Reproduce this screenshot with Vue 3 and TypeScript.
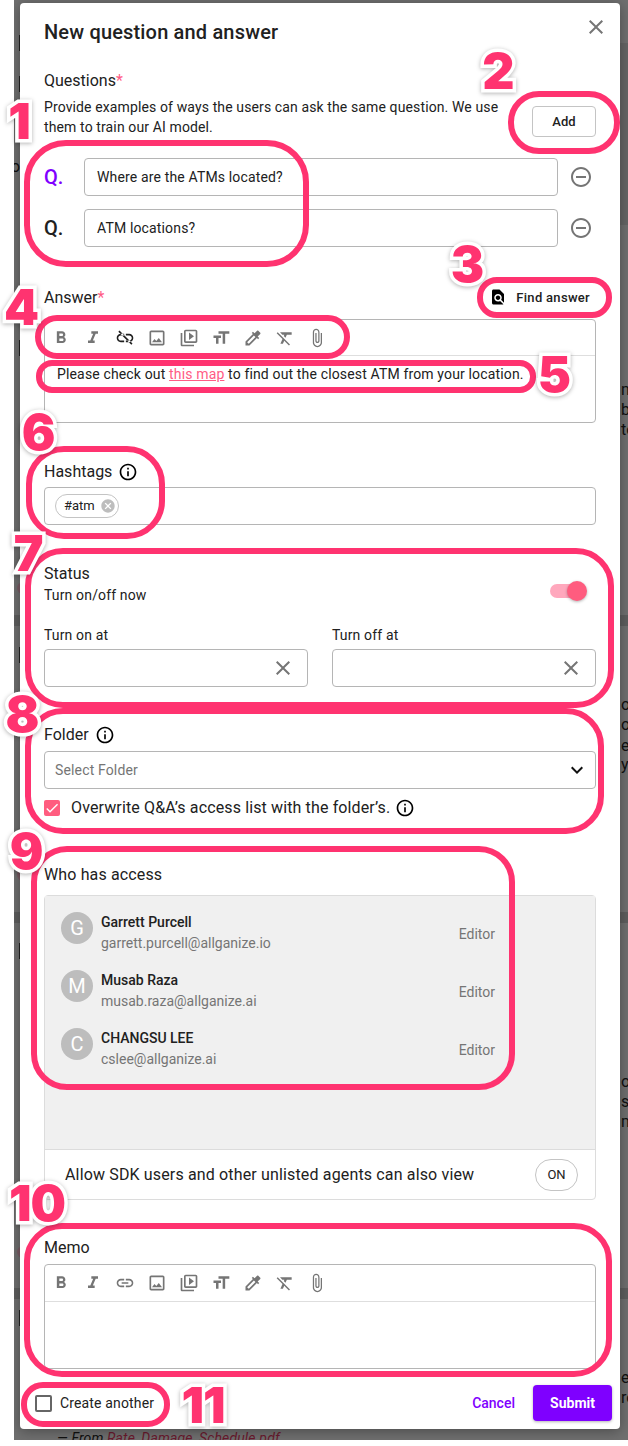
<script setup lang="ts">
interface Ring { x: number; y: number; w: number; h: number; r: number }
interface Mark { text: string; x: number; y: number }

const icons: Record<string, string> = {
  bold: 'M15.6 10.79c.97-.67 1.65-1.77 1.65-2.79 0-2.26-1.75-4-4-4H7v14h7.04c2.09 0 3.71-1.7 3.71-3.79 0-1.52-.86-2.82-2.15-3.42zM10 6.5h3c.83 0 1.5.67 1.5 1.5s-.67 1.5-1.5 1.5h-3v-3zm3.5 9H10v-3h3.5c.83 0 1.5.67 1.5 1.5s-.67 1.5-1.5 1.5z',
  italic: 'M10 4v3h2.21l-3.42 8H6v3h8v-3h-2.21l3.42-8H18V4z',
  link: 'M3.9 12c0-1.71 1.39-3.1 3.1-3.1h4V7H7c-2.76 0-5 2.24-5 5s2.24 5 5 5h4v-1.9H7c-1.71 0-3.1-1.39-3.1-3.1zM8 13h8v-2H8v2zm9-6h-4v1.9h4c1.71 0 3.1 1.39 3.1 3.1s-1.39 3.1-3.1 3.1h-4V17h4c2.76 0 5-2.24 5-5s-2.24-5-5-5z',
  linkOff: 'M3.9 12c0-1.71 1.39-3.1 3.1-3.1h4V7H7c-2.76 0-5 2.24-5 5s2.24 5 5 5h4v-1.9H7c-1.71 0-3.1-1.39-3.1-3.1zM17 7h-4v1.9h4c1.71 0 3.1 1.39 3.1 3.1s-1.39 3.1-3.1 3.1h-4V17h4c2.76 0 5-2.24 5-5s-2.24-5-5-5zM5.4 3l15.6 15.6-1.4 1.4L4 4.4z',
  image: 'M19 5v14H5V5h14m0-2H5c-1.1 0-2 .9-2 2v14c0 1.1.9 2 2 2h14c1.1 0 2-.9 2-2V5c0-1.1-.9-2-2-2zm-4.86 8.86l-3 3.87L9 13.14 6 17h12l-3.86-5.14z',
  video: 'M4 6H2v14c0 1.1.9 2 2 2h14v-2H4V6zm16-4H8c-1.1 0-2 .9-2 2v12c0 1.1.9 2 2 2h12c1.1 0 2-.9 2-2V4c0-1.1-.9-2-2-2zm0 14H8V4h12v12zM12 5.5v9l6-4.5z',
  size: 'M9 4v3h5v12h3V7h5V4H9zm-6 8h3v7h3v-7h3V9H3v3z',
  colorize: 'M20.71 5.63l-2.34-2.34c-.39-.39-1.02-.39-1.41 0l-3.12 3.12-1.93-1.91-1.41 1.41 1.42 1.42L3 16.25V21h4.75l8.92-8.92 1.42 1.42 1.41-1.41-1.92-1.92 3.12-3.12c.4-.4.4-1.03.01-1.42zM6.92 19L5 17.08l8.06-8.06 1.92 1.92L6.92 19z',
  clear: 'M3.27 5L2 6.27l6.97 6.97L6.5 19h3l1.57-3.66L16.73 21 18 19.73 3.55 5.27 3.27 5zM6 5v.18L8.82 8h2.4l-.72 1.68 2.1 2.1L14.21 8H20V5H6z',
  attach: 'M16.5 6v11.5c0 2.21-1.79 4-4 4s-4-1.79-4-4V5c0-1.38 1.12-2.5 2.5-2.5s2.5 1.12 2.5 2.5v10.5c0 .55-.45 1-1 1s-1-.45-1-1V6H10v9.5c0 1.38 1.12 2.5 2.5 2.5s2.5-1.12 2.5-2.5V5c0-2.21-1.79-4-4-4S7 2.79 7 5v12.5c0 3.04 2.46 5.5 5.5 5.5s5.5-2.46 5.5-5.5V6h-1.5z',
  find: 'M20 19.59V8l-6-6H6c-1.1 0-1.99.9-1.99 2L4 20c0 1.1.89 2 1.99 2H18c.45 0 .85-.15 1.19-.4l-4.43-4.43c-.8.52-1.74.83-2.76.83-2.76 0-5-2.24-5-5s2.24-5 5-5 5 2.24 5 5c0 1.02-.31 1.96-.83 2.75L20 19.59zM9 13c0 1.66 1.34 3 3 3s3-1.34 3-3-1.34-3-3-3-3 1.34-3 3z',
  info: 'M11 7h2v2h-2zm0 4h2v6h-2zm1-9C6.48 2 2 6.48 2 12s4.48 10 10 10 10-4.48 10-10S17.52 2 12 2zm0 18c-4.41 0-8-3.59-8-8s3.59-8 8-8 8 3.59 8 8-3.59 8-8 8z',
  minus: 'M7 11v2h10v-2H7zm5-9C6.48 2 2 6.48 2 12s4.48 10 10 10 10-4.48 10-10S17.52 2 12 2zm0 18c-4.41 0-8-3.59-8-8s3.59-8 8-8 8 3.59 8 8-3.59 8-8 8z',
  close: 'M19 6.41L17.59 5 12 10.59 6.41 5 5 6.41 10.59 12 5 17.59 6.41 19 12 13.41 17.59 19 19 17.59 13.41 12z',
  chevron: 'M16.59 8.59L12 13.17 7.41 8.59 6 10l6 6 6-6z',
  check: 'M9 16.17L4.83 12l-1.41 1.41L9 19 21 7l-1.41-1.41z',
  chipX: 'M12 2C6.47 2 2 6.47 2 12s4.47 10 10 10 10-4.47 10-10S17.53 2 12 2zm5 13.59L15.59 17 12 13.41 8.41 17 7 15.59 10.59 12 7 8.41 8.41 7 12 10.59 15.59 7 17 8.41 13.41 12 17 15.59z'
}

const answerTools = ['bold', 'italic', 'linkOff', 'image', 'video', 'size', 'colorize', 'clear', 'attach']
const memoTools = ['bold', 'italic', 'link', 'image', 'video', 'size', 'colorize', 'clear', 'attach']

const people = [
  { initial: 'G', name: 'Garrett Purcell', email: 'garrett.purcell@allganize.io' },
  { initial: 'M', name: 'Musab Raza', email: 'musab.raza@allganize.ai' },
  { initial: 'C', name: 'CHANGSU LEE', email: 'cslee@allganize.ai' }
]

// annotation layer painted on the screenshot
const rings: Ring[] = [
  { x: 24, y: 140, w: 285, h: 127, r: 42 },
  { x: 508, y: 91, w: 112, h: 63, r: 31 },
  { x: 477, y: 277, w: 135, h: 41, r: 20 },
  { x: 35, y: 315, w: 315, h: 44, r: 22 },
  { x: 36, y: 360, w: 500, h: 33, r: 16 },
  { x: 26, y: 446, w: 139, h: 93, r: 38 },
  { x: 25, y: 548, w: 589, h: 160, r: 38 },
  { x: 25, y: 708, w: 579, h: 126, r: 38 },
  { x: 31, y: 846, w: 484, h: 244, r: 36 },
  { x: 24, y: 1223, w: 588, h: 154, r: 38 },
  { x: 21, y: 1382, w: 149, h: 45, r: 22 }
]

const marks: Mark[] = [
  { text: '1', x: 19, y: 121 },
  { text: '2', x: 498, y: 71 },
  { text: '3', x: 467, y: 264 },
  { text: '4', x: 21, y: 307 },
  { text: '5', x: 554, y: 374 },
  { text: '6', x: 38, y: 432 },
  { text: '7', x: 28, y: 553 },
  { text: '8', x: 22, y: 714 },
  { text: '9', x: 26, y: 851 },
  { text: '10', x: 37, y: 1203 },
  { text: '11', x: 203, y: 1405 }
]

// bits of the page behind the dialog
const bands = [615, 912, 1288]
const edgeText = [
  { text: 'n', y: 390 }, { text: 'b', y: 410 }, { text: 'te', y: 430 },
  { text: 'o', y: 705 }, { text: 'o', y: 725 }, { text: 'e', y: 746 }, { text: 'y', y: 765 },
  { text: 'or', y: 1082 }, { text: 'se', y: 1102 }, { text: 'm', y: 1122 },
  { text: 'el', y: 1378 }, { text: 're', y: 1398 }
]
const leftBars = [35, 76, 340, 647, 943, 1310]
const leftDots = [588, 875, 1252]
</script>

<template>
  <div class="page">
    <div class="backdrop">
      <div class="side-panel"></div>
      <div v-for="b in bands" :key="b" class="band" :style="{ top: b + 'px' }"></div>
      <span v-for="t in edgeText" :key="t.y" class="edge-text" :style="{ top: t.y - 10 + 'px' }">{{ t.text }}</span>
      <span class="edge-text left-o">o</span>
      <i v-for="b in leftBars" :key="b" class="left-bar" :style="{ top: b + 'px' }"></i>
      <i v-for="d in leftDots" :key="d" class="left-dot" :style="{ top: d - 6 + 'px' }"></i>

      <div class="modal">
        <button class="close" type="button">
          <svg class="ic24" viewBox="0 0 24 24"><path :d="icons.close" /></svg>
        </button>
        <h2 class="title">New question and answer</h2>

        <div class="label questions-label">Questions<span class="req">*</span></div>
        <div class="helper-row">
          <p class="helper">Provide examples of ways the users can ask the same question. We use them to train our AI model.</p>
          <button class="add" type="button">Add</button>
        </div>

        <div class="q-row first">
          <span class="q-mark purple">Q.</span>
          <div class="field q-field">Where are the ATMs located?</div>
          <svg class="ic24 minus" viewBox="0 0 24 24"><path :d="icons.minus" /></svg>
        </div>
        <div class="q-row second">
          <span class="q-mark">Q.</span>
          <div class="field q-field">ATM locations?</div>
          <svg class="ic24 minus" viewBox="0 0 24 24"><path :d="icons.minus" /></svg>
        </div>

        <div class="answer-head">
          <div class="label">Answer<span class="req">*</span></div>
          <div class="find">
            <svg class="ic16" viewBox="0 0 24 24"><path :d="icons.find" /></svg>
            <span>Find answer</span>
          </div>
        </div>
        <div class="editor answer-editor">
          <div class="toolbar">
            <svg v-for="t in answerTools" :key="t" class="tool" :class="{ black: t === 'linkOff' }" viewBox="0 0 24 24"><path :d="icons[t]" /></svg>
          </div>
          <div class="editor-body">Please check out <a class="map-link">this map</a> to find out the closest ATM from your location.</div>
        </div>

        <div class="label with-info hash-label">
          Hashtags
          <svg class="ic18" viewBox="0 0 24 24"><path :d="icons.info" /></svg>
        </div>
        <div class="field tag-field">
          <span class="chip">#atm
            <svg class="chip-x" viewBox="0 0 24 24"><path :d="icons.chipX" /></svg>
          </span>
        </div>

        <div class="status">
          <div>
            <div class="label">Status</div>
            <div class="sub">Turn on/off now</div>
          </div>
          <div class="toggle"><span class="thumb"></span></div>
        </div>
        <div class="dates">
          <div>
            <div class="date-label">Turn on at</div>
            <div class="field date-field"><svg class="ic24 date-x" viewBox="0 0 24 24"><path :d="icons.close" /></svg></div>
          </div>
          <div>
            <div class="date-label">Turn off at</div>
            <div class="field date-field"><svg class="ic24 date-x" viewBox="0 0 24 24"><path :d="icons.close" /></svg></div>
          </div>
        </div>

        <div class="label with-info folder-label">
          Folder
          <svg class="ic18" viewBox="0 0 24 24"><path :d="icons.info" /></svg>
        </div>
        <div class="field select-field">
          <span>Select Folder</span>
          <svg class="ic24 chevron" viewBox="0 0 24 24"><path :d="icons.chevron" /></svg>
        </div>
        <div class="overwrite">
          <span class="checked"><svg viewBox="0 0 24 24"><path :d="icons.check" /></svg></span>
          <span class="overwrite-text">Overwrite Q&amp;A’s access list with the folder’s.</span>
          <svg class="ic18" viewBox="0 0 24 24"><path :d="icons.info" /></svg>
        </div>

        <div class="label who-label">Who has access</div>
        <div class="access">
          <div class="people">
            <div v-for="p in people" :key="p.email" class="person">
              <span class="avatar">{{ p.initial }}</span>
              <div class="who">
                <div class="name">{{ p.name }}</div>
                <div class="email">{{ p.email }}</div>
              </div>
              <span class="role">Editor</span>
            </div>
          </div>
          <div class="allow">
            <span>Allow SDK users and other unlisted agents can also view</span>
            <span class="on">ON</span>
          </div>
        </div>

        <div class="label memo-label">Memo</div>
        <div class="editor memo-editor">
          <div class="toolbar">
            <svg v-for="t in memoTools" :key="t" class="tool" viewBox="0 0 24 24"><path :d="icons[t]" /></svg>
          </div>
          <div class="editor-body"></div>
        </div>

        <div class="footer">
          <label class="another"><span class="box"></span>Create another</label>
          <span class="cancel">Cancel</span>
          <button class="submit" type="button">Submit</button>
        </div>
      </div>

      <div class="from"><span class="dash">— From</span> <span class="file">Rate_Damage_Schedule.pdf</span></div>
    </div>

    <div
      v-for="(r, i) in rings"
      :key="i"
      class="ring"
      :style="{ left: r.x + 'px', top: r.y + 'px', width: r.w + 'px', height: r.h + 'px', borderRadius: r.r + 'px' }"
    ></div>
    <span
      v-for="m in marks"
      :key="m.text"
      class="mark"
      :style="{ left: m.x + 'px', top: m.y + 'px' }"
    >{{ m.text }}</span>
  </div>
</template>

<style>
html,
body {
  margin: 0;
  background: #fff;
}
</style>

<style scoped>
.page {
  position: relative;
  width: 628px;
  height: 1446px;
  overflow: hidden;
  background: #fff;
  font-family: Roboto, "Liberation Sans", sans-serif;
  color: #212121;
}
.backdrop {
  position: relative;
  margin-left: 14px;
  width: 614px;
  height: 1440px;
  padding: 3px 8px 0 6px;
  box-sizing: border-box;
  overflow: hidden;
  background: #707070;
}
.side-panel {
  position: absolute;
  left: 600px;
  right: 0;
  top: 43px;
  height: 182px;
  background: #666;
}
.band {
  position: absolute;
  left: 0;
  right: 0;
  height: 11px;
  background: #5f5f5f;
}
.edge-text {
  position: absolute;
  left: 607px;
  font-size: 16px;
  line-height: 20px;
  color: #111;
  white-space: nowrap;
}
.left-o {
  left: -3px;
  top: 157px;
}
.left-bar {
  position: absolute;
  left: 5px;
  width: 1px;
  height: 16px;
  background: #222;
}
.left-dot {
  position: absolute;
  left: 3px;
  width: 12px;
  height: 12px;
  border-radius: 50%;
  background: #7a5c64;
}

.modal {
  position: relative;
  width: 600px;
  height: 1426px;
  padding: 13px 24px 0;
  box-sizing: border-box;
  background: #fff;
  border-radius: 4px;
  box-shadow: 0 2px 14px rgba(0, 0, 0, 0.35);
}
.close {
  position: absolute;
  right: 12px;
  top: 12px;
  width: 24px;
  height: 24px;
  padding: 0;
  border: 0;
  background: none;
}
.close path {
  fill: #757575;
}
.ic24 {
  display: block;
  width: 24px;
  height: 24px;
}
.ic18 {
  display: block;
  width: 20px;
  height: 20px;
  flex: none;
}
.ic16 {
  display: block;
  width: 18px;
  height: 18px;
}
.title {
  margin: 0;
  font-size: 20px;
  line-height: 32px;
  font-weight: 500;
  letter-spacing: 0.17px;
}
.label {
  font-size: 16px;
  line-height: 26px;
  margin-bottom: -2px;
}
.req {
  color: #ff5c85;
}
.questions-label {
  margin-top: 20px;
}
.helper-row {
  display: flex;
  justify-content: space-between;
  align-items: flex-start;
  margin-top: 5px;
}
.helper {
  margin: 0;
  width: 464px;
  font-size: 14px;
  line-height: 20px;
  letter-spacing: 0.12px;
}
.add {
  width: 64px;
  height: 31px;
  margin-top: 9px;
  padding: 0;
  font-family: inherit;
  font-size: 13px;
  font-weight: 500;
  color: #212121;
  background: #fff;
  border: 1px solid #c4c4c4;
  border-radius: 4px;
}
.q-row {
  display: flex;
  align-items: center;
}
.q-row.first {
  margin-top: 21px;
}
.q-row.second {
  margin-top: 13px;
}
.q-mark {
  width: 40px;
  font-size: 20px;
  font-weight: 500;
}
.purple {
  color: #7f00ff;
}
.field {
  box-sizing: border-box;
  height: 38px;
  background: #fff;
  border: 1px solid #b5b5b5;
  border-radius: 4px;
}
.q-field {
  flex: 1;
  padding: 0 12px;
  font-size: 14px;
  line-height: 36px;
  letter-spacing: 0.15px;
}
.minus {
  margin: 0 3px 0 11px;
}
.minus path {
  fill: #757575;
}
.answer-head {
  display: flex;
  justify-content: space-between;
  align-items: center;
  margin-top: 38px;
}
.find {
  display: flex;
  align-items: center;
  gap: 9px;
  padding-right: 6px;
  font-size: 13px;
  font-weight: 500;
  letter-spacing: 0.3px;
}
.editor {
  box-sizing: border-box;
  border: 1px solid #b5b5b5;
  border-radius: 4px;
}
.answer-editor {
  margin-top: 10px;
  height: 104px;
}
.answer-editor .toolbar {
  height: 35px;
}
.toolbar {
  display: flex;
  gap: 12px;
  align-items: center;
  height: 36px;
  padding-left: 6px;
  box-sizing: content-box;
  border-bottom: 1px solid #dedede;
}
.tool {
  display: block;
  width: 20px;
  height: 20px;
}
.tool path {
  fill: #757575;
}
.tool.black path {
  fill: #1f1f1f;
}
.editor-body {
  padding: 8px 12px 0;
  font-size: 14px;
  line-height: 20px;
  letter-spacing: 0.15px;
}
.map-link {
  color: #ff5c85;
  text-decoration: underline;
}
.with-info {
  display: flex;
  align-items: center;
  gap: 6px;
}
.hash-label {
  margin-top: 36px;
}
.tag-field {
  margin-top: 4px;
  display: flex;
  align-items: center;
  padding-left: 10px;
}
.chip {
  display: flex;
  align-items: center;
  justify-content: space-between;
  box-sizing: border-box;
  width: 64px;
  height: 24px;
  padding: 0 2px 2px 8px;
  font-size: 13px;
  border: 1px solid #c4c4c4;
  border-radius: 12px;
}
.chip-x {
  width: 16px;
  height: 16px;
  margin-top: 2px;
}
.chip-x path {
  fill: #bdbdbd;
}
.status {
  display: flex;
  justify-content: space-between;
  margin-top: 36px;
}
.sub {
  font-size: 14px;
  line-height: 20px;
  letter-spacing: 0.15px;
}
.toggle {
  position: relative;
  width: 34px;
  height: 14px;
  margin: 23px 12px 0 0;
  border-radius: 7px;
  background: #ffa8bd;
}
.thumb {
  position: absolute;
  right: -3px;
  top: -3px;
  width: 20px;
  height: 20px;
  border-radius: 50%;
  background: #ff5c7f;
  box-shadow: 0 1px 3px rgba(0, 0, 0, 0.3);
}
.dates {
  display: grid;
  grid-template-columns: 264px 264px;
  gap: 24px;
  margin-top: 18px;
}
.date-label {
  font-size: 14px;
  line-height: 24px;
  letter-spacing: 0.15px;
}
.date-field {
  margin-top: 2px;
  display: flex;
  justify-content: flex-end;
  align-items: center;
  padding-right: 12px;
}
.date-x path {
  fill: #757575;
}
.folder-label {
  margin-top: 35px;
}
.select-field {
  margin-top: 5px;
  display: flex;
  justify-content: space-between;
  align-items: center;
  padding: 0 6px 0 10px;
  font-size: 14px;
  letter-spacing: 0.15px;
  color: #757575;
}
.chevron path {
  fill: #111;
}
.overwrite {
  display: flex;
  align-items: center;
  margin-top: 7px;
  height: 24px;
}
.checked {
  display: block;
  width: 16px;
  height: 16px;
  border-radius: 2px;
  background: #ff5c7f;
}
.checked svg {
  display: block;
  width: 16px;
  height: 16px;
}
.checked path {
  fill: #fff;
}
.overwrite-text {
  margin: 0 5px 2px 11px;
  font-size: 16px;
  letter-spacing: 0.13px;
}
.who-label {
  margin-top: 42px;
  letter-spacing: 0.14px;
}
.access {
  margin-top: 9px;
  box-sizing: border-box;
  height: 305px;
  border: 1px solid #dcdcdc;
  border-radius: 4px;
}
.people {
  box-sizing: border-box;
  height: 254px;
  padding: 8px 100px 0 16px;
  background: #f0f0f0;
  border-bottom: 1px solid #dcdcdc;
}
.person {
  display: flex;
  align-items: center;
  height: 58px;
}
.avatar {
  align-self: flex-start;
  margin-top: 8px;
  width: 32px;
  height: 32px;
  margin-right: 8px;
  border-radius: 50%;
  background: #bdbdbd;
  color: #fff;
  font-size: 20px;
  line-height: 32px;
  text-align: center;
}
.who {
  flex: 1;
  margin-bottom: 1px;
}
.name {
  font-size: 14px;
  line-height: 20px;
  font-weight: 500;
}
.email {
  margin-top: 1px;
  font-size: 14px;
  line-height: 20px;
  color: #757575;
}
.role {
  margin-top: 2px;
  font-size: 14px;
  color: #757575;
}
.allow {
  display: flex;
  justify-content: space-between;
  align-items: center;
  height: 49px;
  padding: 0 17px 0 20px;
  font-size: 16px;
  letter-spacing: 0.15px;
}
.on {
  box-sizing: border-box;
  width: 43px;
  height: 32px;
  border: 1px solid #c4c4c4;
  border-radius: 16px;
  font-size: 13px;
  line-height: 30px;
  text-align: center;
  letter-spacing: 0;
}
.memo-label {
  margin-top: 35px;
}
.memo-editor {
  margin-top: 5px;
  height: 105px;
}
.footer {
  display: flex;
  align-items: center;
  margin: 16px -16px 0 -9px;
  height: 36px;
}
.another {
  display: flex;
  align-items: center;
  flex: 1;
  font-size: 14px;
  letter-spacing: 0.15px;
}
.box {
  box-sizing: border-box;
  width: 17px;
  height: 17px;
  margin-right: 8px;
  border: 2px solid #666;
  border-radius: 2px;
}
.cancel {
  margin-right: 18px;
  font-size: 14px;
  font-weight: 500;
  color: #7f00ff;
}
.submit {
  width: 79px;
  height: 36px;
  padding: 0;
  font-family: inherit;
  font-size: 14px;
  font-weight: 700;
  color: #fff;
  background: #7f00ff;
  border: 0;
  border-radius: 4px;
  box-shadow: 0 1px 3px rgba(0, 0, 0, 0.3);
}
.from {
  margin: -1px 0 0 37px;
  font-size: 14px;
  line-height: 20px;
  font-style: italic;
  letter-spacing: 0.15px;
  white-space: nowrap;
}
.dash {
  color: #111;
}
.file {
  color: #6b1a2e;
}

.ring {
  position: absolute;
  box-sizing: border-box;
  border: 6px solid #ff3370;
  pointer-events: none;
}
.mark {
  position: absolute;
  transform: translate(-50%, -50%);
  font-family: Inter, "Open Sans", sans-serif;
  font-size: 50px;
  font-weight: 900;
  line-height: 1;
  letter-spacing: -1px;
  color: #ff3370;
  -webkit-text-stroke: 7px #fff;
  paint-order: stroke fill;
  filter: drop-shadow(0 1px 2px rgba(0, 0, 0, 0.3));
}
</style>
